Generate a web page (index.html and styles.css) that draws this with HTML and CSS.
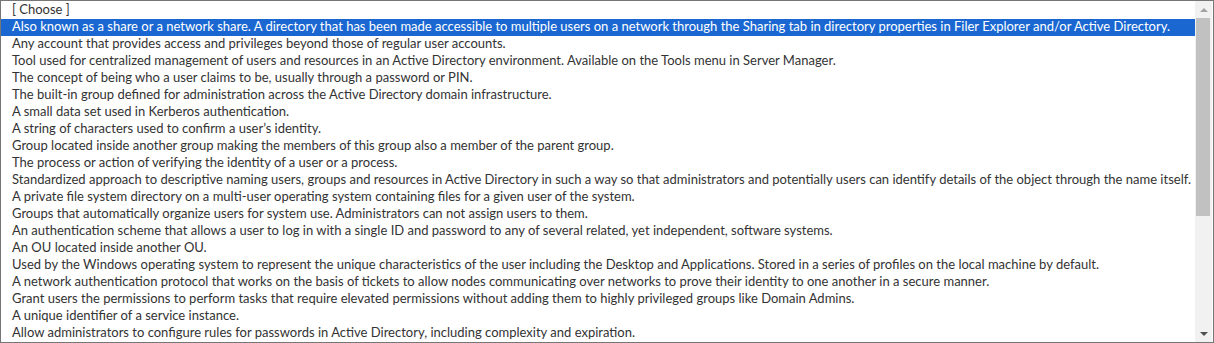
FILE: index.html
```html
<!DOCTYPE html>
<html>
<head>
<meta charset="utf-8">
<link rel="stylesheet" href="styles.css">
</head>
<body>
<div class="listbox">
  <div class="options">
    <div class="opt">[ Choose ]</div>
    <div class="opt selected">Also known as a share or a network share. A directory that has been made accessible to multiple users on a network through the Sharing tab in directory properties in Filer Explorer and/or Active Directory.</div>
    <div class="opt">Any account that provides access and privileges beyond those of regular user accounts.</div>
    <div class="opt">Tool used for centralized management of users and resources in an Active Directory environment. Available on the Tools menu in Server Manager.</div>
    <div class="opt">The concept of being who a user claims to be, usually through a password or PIN.</div>
    <div class="opt">The built-in group defined for administration across the Active Directory domain infrastructure.</div>
    <div class="opt">A small data set used in Kerberos authentication.</div>
    <div class="opt">A string of characters used to confirm a user’s identity.</div>
    <div class="opt">Group located inside another group making the members of this group also a member of the parent group.</div>
    <div class="opt">The process or action of verifying the identity of a user or a process.</div>
    <div class="opt">Standardized approach to descriptive naming users, groups and resources in Active Directory in such a way so that administrators and potentially users can identify details of the object through the name itself.</div>
    <div class="opt">A private file system directory on a multi-user operating system containing files for a given user of the system.</div>
    <div class="opt">Groups that automatically organize users for system use. Administrators can not assign users to them.</div>
    <div class="opt">An authentication scheme that allows a user to log in with a single ID and password to any of several related, yet independent, software systems.</div>
    <div class="opt">An OU located inside another OU.</div>
    <div class="opt">Used by the Windows operating system to represent the unique characteristics of the user including the Desktop and Applications. Stored in a series of profiles on the local machine by default.</div>
    <div class="opt">A network authentication protocol that works on the basis of tickets to allow nodes communicating over networks to prove their identity to one another in a secure manner.</div>
    <div class="opt">Grant users the permissions to perform tasks that require elevated permissions without adding them to highly privileged groups like Domain Admins.</div>
    <div class="opt">A unique identifier of a service instance.</div>
    <div class="opt">Allow administrators to configure rules for passwords in Active Directory, including complexity and expiration.</div>
  </div>
  <div class="scrollbar">
    <div class="btn"><span class="arrow-up"></span></div>
    <div class="track"><div class="thumb"></div></div>
    <div class="btn"><span class="arrow-down"></span></div>
  </div>
</div>
</body>
</html>
```
FILE: styles.css
```css
html, body {
  margin: 0;
  padding: 0;
  background: #ffffff;
}
.listbox {
  width: 1214px;
  height: 343px;
  box-sizing: border-box;
  border: 1px solid #767676;
  display: flex;
  font-family: Lato, "Liberation Sans", sans-serif;
  font-size: 13px;
  color: #333333;
  overflow: hidden;
}
.options {
  flex: 1;
  min-width: 0;
  padding-top: 1px;
}
.opt {
  height: 17px;
  box-sizing: border-box;
  line-height: 14px;
  padding: 0 0 3px 11px;
  white-space: nowrap;
  overflow: hidden;
}
.opt.selected {
  background: #1a67d2;
  color: #ffffff;
}
.scrollbar {
  width: 17px;
  margin-right: 1px;
  background: #f1f1f1;
  display: flex;
  flex-direction: column;
}
.btn {
  height: 17px;
  display: flex;
  align-items: center;
  justify-content: center;
}
.arrow-up {
  width: 0;
  height: 0;
  border-left: 4px solid transparent;
  border-right: 4px solid transparent;
  border-bottom: 4px solid #a3a3a3;
}
.arrow-down {
  width: 0;
  height: 0;
  border-left: 4px solid transparent;
  border-right: 4px solid transparent;
  border-top: 4px solid #505050;
}
.track {
  flex: 1;
  padding: 0 2px 0 1px;
}
.thumb {
  height: 198px;
  background: #c1c1c1;
}
```
